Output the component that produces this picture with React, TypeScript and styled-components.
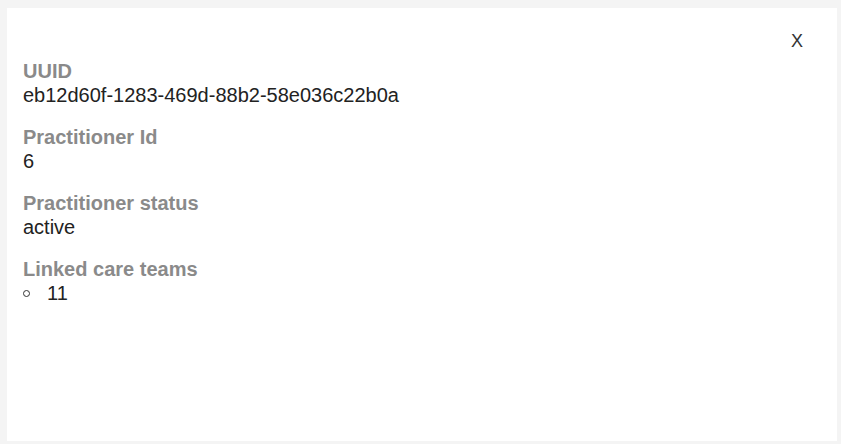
import React from 'react';
import styled, { createGlobalStyle } from 'styled-components';

const GlobalStyle = createGlobalStyle`
  html, body {
    margin: 0;
    padding: 0;
    background: #f4f4f4;
  }
  body {
    padding: 8px 4px 3px 7px;
    font-family: "Liberation Sans", Arial, sans-serif;
  }
`;

const Panel = styled.div`
  box-sizing: border-box;
  width: 830px;
  height: 433px;
  background: #ffffff;
  padding: 23px 34px 16px 16px;
  display: flex;
  flex-direction: column;
`;

const Header = styled.div`
  display: flex;
  justify-content: flex-end;
  height: 20px;
  margin-bottom: 7px;
`;

const CloseButton = styled.button`
  border: none;
  background: none;
  padding: 0;
  margin: 0;
  font-family: "Liberation Sans", Arial, sans-serif;
  font-size: 18px;
  line-height: 20px;
  color: #333333;
  cursor: pointer;
`;

const Details = styled.dl`
  margin: 0;
  display: flex;
  flex-direction: column;
  gap: 18px;
`;

const Field = styled.div`
  display: flex;
  flex-direction: column;
`;

const Label = styled.dt`
  font-size: 20px;
  line-height: 27px;
  font-weight: 700;
  color: #8a8a8a;
`;

const Value = styled.dd`
  margin: 0;
  font-size: 20px;
  line-height: 21px;
  color: #222222;
`;

const TeamList = styled.ul`
  margin: 0;
  padding-left: 24px;
  list-style: none;
  font-size: 20px;
  line-height: 20px;
  color: #222222;
`;

const TeamItem = styled.li`
  position: relative;

  &::before {
    content: '';
    position: absolute;
    left: -24px;
    top: 7px;
    width: 5px;
    height: 5px;
    border: 1px solid #333333;
    border-radius: 50%;
  }
`;

const fields = [
  { label: 'UUID', value: 'eb12d60f-1283-469d-88b2-58e036c22b0a' },
  { label: 'Practitioner Id', value: '6' },
  { label: 'Practitioner status', value: 'active' }
];

const careTeams = ['11'];

const App = () => (
  <>
    <GlobalStyle />
    <Panel>
      <Header>
        <CloseButton type="button">X</CloseButton>
      </Header>
      <Details>
        {fields.map((f) => (
          <Field key={f.label}>
            <Label>{f.label}</Label>
            <Value>{f.value}</Value>
          </Field>
        ))}
        <Field>
          <Label>Linked care teams</Label>
          <TeamList>
            {careTeams.map((t) => (
              <TeamItem key={t}>{t}</TeamItem>
            ))}
          </TeamList>
        </Field>
      </Details>
    </Panel>
  </>
);

export default App;
